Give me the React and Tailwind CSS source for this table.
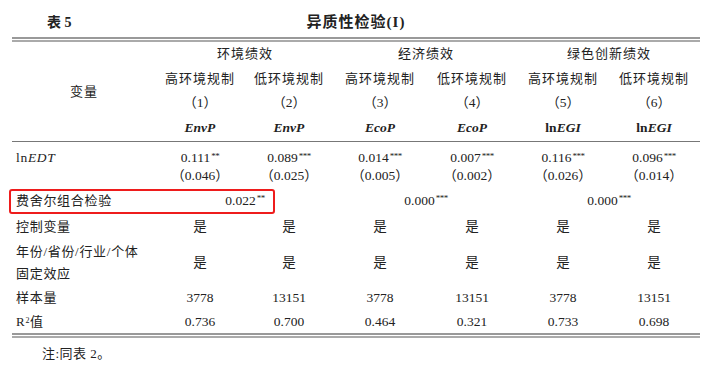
import React from "react";

const COLS = "grid-cols-[144px_88px_90px_92px_92px_90px_92px]";

const Star = ({ s }) => (
  <sup className="text-[9px] relative -top-[3px] ml-[1px] tracking-[-0.5px]">{s}</sup>
);

const Cell = ({ children, className = "" }) => (
  <div className={`flex items-center justify-center ${className}`}>{children}</div>
);

function Row({ label, values, h }) {
  return (
    <div className={`grid ${COLS} ${h}`}>
      <div className="flex items-center pl-[4px] tracking-[0.7px]">{label}</div>
      {values.map((v, i) => (
        <Cell key={i} className="text-[13.5px]">
          {v}
        </Cell>
      ))}
    </div>
  );
}

const coef = [
  ["0.111", "**"],
  ["0.089", "***"],
  ["0.014", "***"],
  ["0.007", "***"],
  ["0.116", "***"],
  ["0.096", "***"],
];
const se = ["0.046", "0.025", "0.005", "0.002", "0.026", "0.014"];
const yes = ["是", "是", "是", "是", "是", "是"];

function App() {
  return (
    <div
      className="w-[720px] h-[367px] bg-white text-[#222] text-[13px] overflow-hidden"
      style={{ fontFamily: '"Liberation Serif", "Noto Sans CJK SC", serif' }}
    >
      <div className="ml-[12px] w-[688px]">
        {/* title */}
        <div className="h-[37px] flex items-end pb-[4px] relative">
          <div className="absolute left-[35px] bottom-[4px] font-bold text-[14px]">表 5</div>
          <div className="w-full text-center font-bold text-[15px] tracking-[1px]">异质性检验(I)</div>
        </div>
        <div className="border-t-2 border-[#999]" />
        <div className="border-t-2 border-[#aaa] mt-[1px]" />

        {/* header */}
        <div className={`grid ${COLS} grid-rows-[24px_25px_25px_25px]`}>
          <div className="row-span-4 flex items-center justify-center tracking-[1px]">变量</div>
          <div className="col-span-2 flex items-center justify-center tracking-[1px]">环境绩效</div>
          <div className="col-span-2 flex items-center justify-center tracking-[1px]">经济绩效</div>
          <div className="col-span-2 flex items-center justify-center tracking-[1px]">绿色创新绩效</div>
          {["高环境规制", "低环境规制", "高环境规制", "低环境规制", "高环境规制", "低环境规制"].map((t, i) => (
            <Cell key={"h" + i} className="tracking-[1px]">{t}</Cell>
          ))}
          {[1, 2, 3, 4, 5, 6].map((n) => (
            <Cell key={"n" + n} className="text-[13.5px]">（{n}）</Cell>
          ))}
          {["EnvP", "EnvP", "EcoP", "EcoP", "EGI", "EGI"].map((t, i) => (
            <Cell key={"v" + i} className="font-bold text-[13.5px]">
              {i > 3 && <span>ln</span>}
              <i>{t}</i>
            </Cell>
          ))}
        </div>
        <div className="border-t border-[#777]" />

        {/* body */}
        <div className="pt-[6px]">
          <Row
            h="h-[18px]"
            label={
              <span className="text-[13.5px]">
                ln<i>EDT</i>
              </span>
            }
            values={coef.map(([v, s], i) => (
              <span key={i}>
                {v}
                <Star s={s} />
              </span>
            ))}
          />
          <Row h="h-[18px]" label="" values={se.map((v) => `（${v}）`)} />

          <div className={`grid ${COLS} h-[24px] mt-[5px] relative text-[13.5px]`}>
            <div className="absolute -left-[3px] top-0 w-[266px] h-[25px] border-2 border-[#ee1c1c] rounded-[3px]" />
            <div className="flex items-center pl-[4px] tracking-[0.7px] text-[13px]">费舍尔组合检验</div>
            <div className="col-span-2 flex items-center justify-center">
              0.022
              <Star s="**" />
            </div>
            <div className="col-span-2 flex items-center justify-center">
              0.000
              <Star s="***" />
            </div>
            <div className="col-span-2 flex items-center justify-center">
              0.000
              <Star s="***" />
            </div>
          </div>

          <Row h="h-[28px]" label="控制变量" values={yes} />
          <Row
            h="h-[44px]"
            label={
              <div className="leading-[22px]">
                年份/省份/行业/个体
                <br />
                固定效应
              </div>
            }
            values={yes}
          />
          <Row h="h-[26px]" label="样本量" values={["3778", "13151", "3778", "13151", "3778", "13151"]} />
          <Row
            h="h-[22px]"
            label={
              <span>
                R<sup className="text-[8px] relative -top-[3px]">2</sup>值
              </span>
            }
            values={["0.736", "0.700", "0.464", "0.321", "0.733", "0.698"]}
          />
        </div>
        <div className="border-t-2 border-[#999]" />
        <div className="border-t-2 border-[#aaa] mt-[1px]" />
        <div className="pl-[30px] mt-[7px] leading-[18px] tracking-[0.5px]">注:同表 2。</div>
      </div>
    </div>
  );
}

export default App;
